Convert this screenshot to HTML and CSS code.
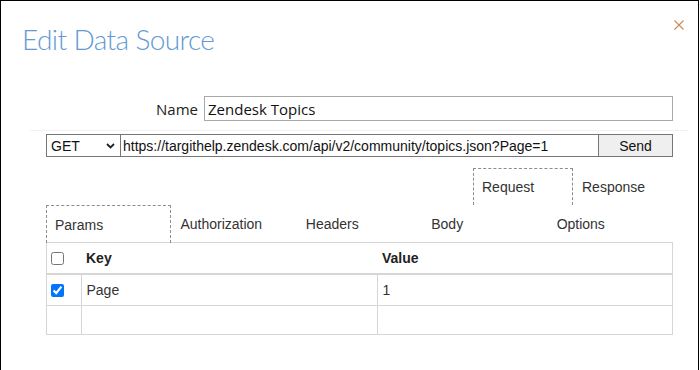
FILE: index.html
```html
<!DOCTYPE html>
<html lang="en">
<head>
    <meta charset="UTF-8">
    <title>Edit Data Source</title>
    <link rel="stylesheet" href="styles.css">
</head>
<body>
    <div class="dialog">
        <h1 class="dialog-title">Edit Data Source</h1>
        <button class="close" type="button" aria-label="Close">
            <svg width="10" height="10" viewBox="0 0 10 10"><path d="M0.5 0.5 L9.5 9.5 M9.5 0.5 L0.5 9.5" stroke="#c98a52" stroke-width="1.1" fill="none"/></svg>
        </button>

        <div class="name-row">
            <label for="ds-name">Name</label>
            <input id="ds-name" type="text" value="Zendesk Topics">
        </div>

        <div class="request-box">
            <div class="url-row">
                <div class="method">
                    <span>GET</span>
                    <svg width="9" height="6" viewBox="0 0 9 6"><path d="M1 1 L4.5 4.5 L8 1" stroke="#222" stroke-width="1.8" fill="none"/></svg>
                </div>
                <input class="url" type="text" value="https://targithelp.zendesk.com/api/v2/community/topics.json?Page=1">
                <button class="send" type="button">Send</button>
            </div>

            <div class="tabs tabs-main">
                <span class="tab active">Request</span>
                <span class="tab">Response</span>
            </div>

            <div class="tabs tabs-sub">
                <span class="tab active">Params</span>
                <span class="tab">Authorization</span>
                <span class="tab">Headers</span>
                <span class="tab">Body</span>
                <span class="tab">Options</span>
            </div>

            <table class="params">
                <thead>
                    <tr>
                        <th class="col-check"><input type="checkbox"></th>
                        <th class="col-key">Key</th>
                        <th>Value</th>
                    </tr>
                </thead>
                <tbody>
                    <tr>
                        <td class="col-check"><input type="checkbox" checked></td>
                        <td>Page</td>
                        <td>1</td>
                    </tr>
                    <tr class="empty">
                        <td class="col-check"></td>
                        <td></td>
                        <td></td>
                    </tr>
                </tbody>
            </table>
        </div>
    </div>
</body>
</html>
```

FILE: styles.css
```css
body {
    margin: 0;
    background: #fff;
    font-family: "Liberation Sans", Arial, sans-serif;
    color: #333;
}
.dialog {
    position: relative;
    width: 699px;
    height: 370px;
    box-sizing: border-box;
    border: 1px solid #000;
    border-bottom: 0;
    background: #fff;
    overflow: hidden;
}
.dialog-title {
    margin: 0;
    padding: 18px 0 0 21px;
    font-family: Lato, "Open Sans", sans-serif;
    font-weight: 300;
    font-size: 28px;
    letter-spacing: -0.6px;
    line-height: 40px;
    color: #6499d4;
}
.close {
    position: absolute;
    top: 19px;
    right: 14px;
    width: 10px;
    height: 10px;
    padding: 0;
    border: 0;
    background: none;
    display: flex;
}
.name-row {
    display: grid;
    grid-template-columns: 158px 469px;
    align-items: center;
    margin-top: 37px;
    padding-left: 45px;
}
.name-row label {
    text-align: right;
    padding-right: 6px;
    font-family: "Open Sans", "Noto Sans", sans-serif;
    font-size: 15px;
    color: #222;
}
.name-row input {
    height: 25px;
    box-sizing: border-box;
    margin: 0;
    border: 1px solid #a9a9a9;
    padding: 0 3px;
    font-family: "Open Sans", "Noto Sans", sans-serif;
    font-size: 15px;
    color: #111;
    outline: none;
}
.request-box {
    margin: 9px 10px 0 29px;
    padding: 3px 15px 0 16px;
    border-top: 1px solid #f2f2f2;
}
.url-row {
    display: flex;
    height: 23px;
}
.method {
    width: 75px;
    box-sizing: border-box;
    border: 1px solid #767676;
    display: flex;
    align-items: center;
    justify-content: space-between;
    padding: 0 5px 0 4px;
    font-size: 14px;
    color: #111;
}
.url {
    flex: 1;
    min-width: 0;
    margin: 0 0 0 -1px;
    height: 23px;
    box-sizing: border-box;
    border: 1px solid #767676;
    padding: 0 2px;
    font-family: "Liberation Sans", Arial, sans-serif;
    font-size: 14px;
    color: #111;
    outline: none;
}
.send {
    width: 75px;
    margin: 0 0 0 -1px;
    height: 23px;
    border: 1px solid #767676;
    background: #efefef;
    font-family: "Liberation Sans", Arial, sans-serif;
    font-size: 14px;
    color: #111;
    padding: 0;
}
.tabs {
    display: flex;
    height: 37px;
}
.tabs-main {
    justify-content: flex-end;
    margin-top: 11px;
}
.tabs-main .tab {
    width: 100px;
}
.tabs-sub .tab {
    flex: 1;
}
.tab {
    box-sizing: border-box;
    display: flex;
    align-items: center;
    padding-left: 8px;
    border: 1px dashed transparent;
    border-bottom: 0;
    font-size: 14px;
    color: #333;
}
.tab.active {
    border-color: #8c8c8c;
}
.tabs-sub .tab.active {
    height: 38px;
    position: relative;
    z-index: 1;
}
.params {
    width: 627px;
    border-collapse: collapse;
    border: 1px solid #d6d6d6;
    font-size: 14px;
    color: #333;
    table-layout: fixed;
}
.params th,
.params td {
    text-align: left;
    padding: 0 0 0 5px;
    height: 30px;
}
.params th {
    font-weight: bold;
    color: #222;
    border-bottom: 2px solid #d6d6d6;
}
.params td {
    border: 1px solid #d6d6d6;
}
.params .col-check {
    width: 34px;
    padding: 0;
}
.params .col-key {
    width: 291px;
}
.params .empty td {
    height: 28px;
}
.params input[type="checkbox"] {
    display: block;
    margin: 0 0 0 4px;
    width: 13px;
    height: 13px;
}
```
